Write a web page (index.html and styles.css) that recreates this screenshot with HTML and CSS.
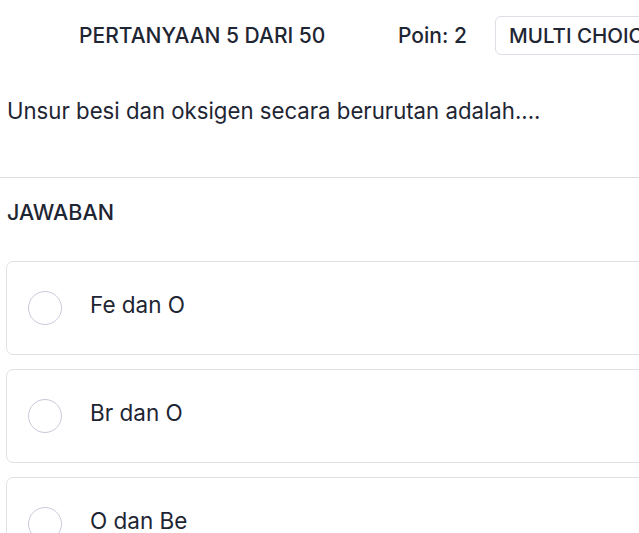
FILE: index.html
```html
<!DOCTYPE html>
<html lang="id">
<head>
<meta charset="utf-8">
<link rel="stylesheet" href="styles.css">
</head>
<body>
<div class="page">
  <header class="top">
    <div class="count">PERTANYAAN 5 DARI 50</div>
    <div class="points">Poin: 2</div>
    <div class="badge">MULTI CHOICE</div>
  </header>
  <p class="question">Unsur besi dan oksigen secara berurutan adalah....</p>
  <hr class="divider">
  <h2 class="label">JAWABAN</h2>
  <div class="options">
    <div class="option"><span class="radio"></span><span class="opt-text">Fe dan O</span></div>
    <div class="option"><span class="radio"></span><span class="opt-text">Br dan O</span></div>
    <div class="option"><span class="radio"></span><span class="opt-text">O dan Be</span></div>
  </div>
</div>
</body>
</html>
```
FILE: styles.css
```css
html, body {
  margin: 0;
  padding: 0;
  background: #ffffff;
  overflow: hidden;
}
body {
  font-family: "Inter", "Liberation Sans", sans-serif;
  color: #1e2533;
}
.page {
  width: 639px;
  height: 533px;
  overflow: hidden;
}
.top {
  display: flex;
  align-items: center;
  height: 39px;
  margin-top: 16px;
  padding-left: 79px;
  white-space: nowrap;
}
.count {
  font-size: 21px;
  font-weight: 500;
  width: 319px;
  flex: none;
}
.points {
  font-size: 21px;
  font-weight: 500;
  width: 97px;
  flex: none;
}
.badge {
  flex: none;
  height: 37px;
  display: flex;
  align-items: center;
  padding: 0 14px 0 13px;
  border: 1px solid #dcdfe6;
  border-radius: 6px;
  font-size: 20.5px;
  font-weight: 500;
}
.question {
  margin: 0;
  padding: 39px 7px 0;
  font-size: 22.2px;
  line-height: 34px;
  height: 81px;
  box-sizing: border-box;
  white-space: nowrap;
}
.divider {
  margin: 41px 0 0;
  border: 0;
  border-top: 1px solid #dedede;
}
.label {
  margin: 0;
  padding: 21px 7px 0;
  font-size: 21.5px;
  font-weight: 500;
  line-height: 26px;
}
.options {
  display: flex;
  flex-direction: column;
  gap: 14px;
  padding: 36px 0 0 6px;
}
.option {
  display: flex;
  align-items: center;
  gap: 28px;
  height: 94px;
  width: 700px;
  padding-left: 21px;
  border: 1px solid #e1e2e8;
  border-radius: 7px;
  box-sizing: border-box;
  flex: none;
}
.radio {
  width: 34px;
  height: 34px;
  border: 1px solid #c9c9da;
  border-radius: 50%;
  flex: none;
  box-sizing: border-box;
}
.opt-text {
  font-size: 22.5px;
  padding-bottom: 8px;
}
```
